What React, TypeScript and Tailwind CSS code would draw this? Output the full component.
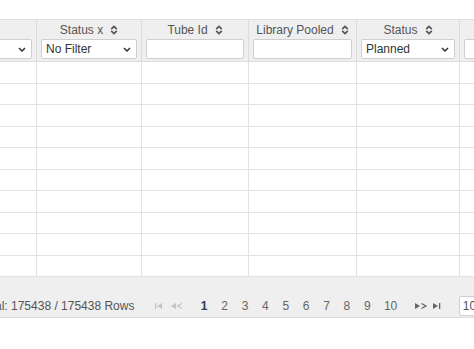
import React from "react";

type Col = { w: string; title: string; filter: "select" | "input"; value?: string };

const cols: Col[] = [
  { w: "w-[100px]", title: "", filter: "select", value: "" },
  { w: "w-[105px]", title: "Status x", filter: "select", value: "No Filter" },
  { w: "w-[107px]", title: "Tube Id", filter: "input" },
  { w: "w-[108px]", title: "Library Pooled", filter: "input" },
  { w: "w-[103px]", title: "Status", filter: "select", value: "Planned" },
  { w: "w-[120px]", title: "", filter: "input" },
];

function SortIcon() {
  return (
    <svg width="8" height="10" viewBox="0 0 8 10" className="shrink-0">
      <path d="M1.2 4.2 L4 1.4 L6.8 4.2" fill="none" stroke="#555" strokeWidth="1.7" />
      <path d="M1.2 5.8 L4 8.6 L6.8 5.8" fill="none" stroke="#555" strokeWidth="1.7" />
    </svg>
  );
}

function Chevron() {
  return (
    <svg width="8" height="5" viewBox="0 0 8 5" className="shrink-0">
      <path d="M1 1 L4 4 L7 1" fill="none" stroke="#333" strokeWidth="1.5" />
    </svg>
  );
}

function Filter({ col }: { col: Col }) {
  if (col.filter === "select") {
    return (
      <div className="flex h-[20px] w-full items-center justify-between rounded-[2px] border border-[#cfcfcf] bg-white pl-[4px] pr-[5px] text-[12px] text-[#333]">
        <span className="whitespace-nowrap">{col.value}</span>
        <Chevron />
      </div>
    );
  }
  return <div className="h-[20px] w-full rounded-[2px] border border-[#cfcfcf] bg-white" />;
}

function FirstIcon({ color }: { color: string }) {
  return (
    <svg width="8" height="6" viewBox="0 0 8 6">
      <rect x="0" y="0" width="1.3" height="6" fill={color} />
      <path d="M7 0 L2 3 L7 6 Z" fill={color} />
    </svg>
  );
}
function PrevIcon({ color }: { color: string }) {
  return (
    <svg width="13" height="6" viewBox="0 0 13 6">
      <path d="M6 0 L1 3 L6 6 Z" fill={color} />
      <path d="M12 0.5 L7.5 3 L12 5.5" fill="none" stroke={color} strokeWidth="1.2" />
    </svg>
  );
}
function NextIcon({ color }: { color: string }) {
  return (
    <svg width="13" height="6" viewBox="0 0 13 6">
      <path d="M1 0 L6 3 L1 6 Z" fill={color} />
      <path d="M7.5 0.5 L12 3 L7.5 5.5" fill="none" stroke={color} strokeWidth="1.2" />
    </svg>
  );
}
function LastIcon({ color }: { color: string }) {
  return (
    <svg width="9" height="6" viewBox="0 0 9 6">
      <path d="M1 0 L6 3 L1 6 Z" fill={color} />
      <rect x="7" y="0" width="1.3" height="6" fill={color} />
    </svg>
  );
}

export default function App() {
  const rows = Array.from({ length: 10 });
  const pages = ["1", "2", "3", "4", "5", "6", "7", "8", "9"];
  return (
    <div className="h-[349px] w-[474px] overflow-hidden bg-white font-['Liberation_Sans',Arial,sans-serif]">
      <div className="h-[19px]" />
      <div className="-ml-[63px] w-[700px]">
        {/* header */}
        <div className="flex border-y border-[#dcdcdc] bg-[#efefef]">
          {cols.map((c, i) => (
            <div
              key={i}
              className={`${c.w} flex shrink-0 flex-col items-center border-r border-[#dcdcdc] px-[4px] pb-[2px] pt-[3px]`}
            >
              <div className="flex h-[14px] items-center gap-[7px] text-[12px] leading-[14px] text-[#555]">
                {c.title ? (
                  <>
                    <span className="whitespace-nowrap">{c.title}</span>
                    <SortIcon />
                  </>
                ) : null}
              </div>
              <div className="mt-[2px] w-full">
                <Filter col={c} />
              </div>
            </div>
          ))}
        </div>
        {/* rows */}
        {rows.map((_, r) => (
          <div key={r} className="flex h-[21.5px] border-b border-[#e2e2e2] bg-white">
            {cols.map((c, i) => (
              <div key={i} className={`${c.w} shrink-0 border-r border-[#e2e2e2]`} />
            ))}
          </div>
        ))}
      </div>
      {/* footer */}
      <div className="flex h-[41px] items-end border-b border-[#dcdcdc] bg-[#efefef] pb-[1px]">
        <div className="flex h-[20px] items-center text-[12px] text-[#555]">
          <span className="-ml-[21px] w-[176px] shrink-0 whitespace-nowrap">Total: 175438 / 175438 Rows</span>
          <div className="flex items-center">
            <FirstIcon color="#c4c4c4" />
            <div className="w-[7px]" />
            <PrevIcon color="#c4c4c4" />
          </div>
          <div className="ml-[11px] flex items-center">
            {pages.map((p) => (
              <span
                key={p}
                className={`w-[20.4px] text-center text-[12px] ${p === "1" ? "font-bold text-[#2e3d50]" : "text-[#666]"}`}
              >
                {p}
              </span>
            ))}
            <span className="w-[26.2px] text-center text-[12px] text-[#666]">10</span>
          </div>
          <div className="ml-[10px] flex items-center">
            <NextIcon color="#666" />
            <div className="w-[5px]" />
            <LastIcon color="#666" />
          </div>
          <div className="ml-[18px] flex h-[20px] w-[50px] shrink-0 items-center rounded-[2px] border border-[#cfcfcf] bg-white pl-[3px] text-[12px] text-[#555]">
            10
          </div>
        </div>
      </div>
    </div>
  );
}
